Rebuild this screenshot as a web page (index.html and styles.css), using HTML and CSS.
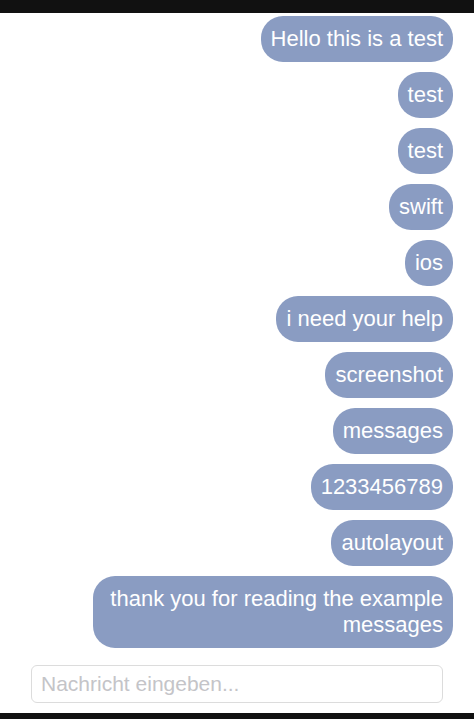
FILE: index.html
```html
<!DOCTYPE html>
<html lang="en">
<head>
  <meta charset="UTF-8">
  <meta name="viewport" content="width=device-width, initial-scale=1.0">
  <title>Chat</title>
  <link rel="stylesheet" href="styles.css">
</head>
<body>
  <div class="screen">
    <div class="bar"></div>
    <div class="messages">
      <div class="bubble">Hello this is a test</div>
      <div class="bubble">test</div>
      <div class="bubble">test</div>
      <div class="bubble">swift</div>
      <div class="bubble">ios</div>
      <div class="bubble">i need your help</div>
      <div class="bubble">screenshot</div>
      <div class="bubble">messages</div>
      <div class="bubble">1233456789</div>
      <div class="bubble">autolayout</div>
      <div class="bubble">thank you for reading the example messages</div>
    </div>
    <div class="compose">
      <input type="text" placeholder="Nachricht eingeben...">
    </div>
    <div class="bar bottom"></div>
  </div>
</body>
</html>
```

FILE: styles.css
```css
body { margin: 0; background: #fff; font-family: "Liberation Sans", Arial, sans-serif; }
.screen { height: 719px; display: flex; flex-direction: column; overflow: hidden; }
.bar { height: 13px; background: #111; flex-shrink: 0; }
.bar.bottom { height: 6px; }
.messages { flex: 1; display: flex; flex-direction: column; align-items: flex-end; gap: 10px; padding: 3px 21px 0 0; }
.bubble { background: #8a9cc2; color: #fff; font-size: 22px; line-height: 26px; padding: 10px 10px; border-radius: 22px; max-width: 340px; text-align: right; }
.compose { padding: 0 0 10px 31px; }
.compose input { box-sizing: border-box; width: 412px; height: 38px; border: 1px solid #dcdcdc; border-radius: 6px; padding: 0 9px; font-family: inherit; font-size: 21px; color: #333; outline: none; }
.compose input::placeholder { color: #c4c4c8; }
```
